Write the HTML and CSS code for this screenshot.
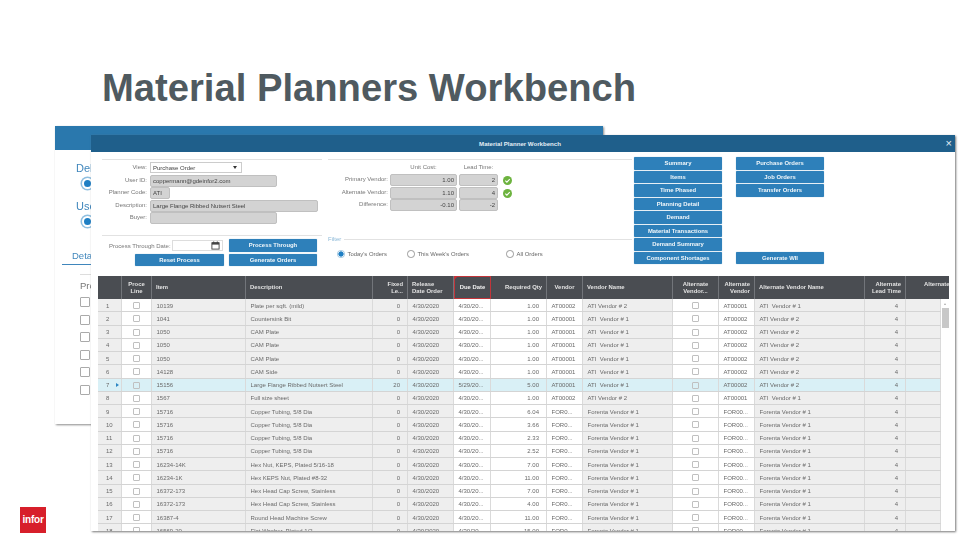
FILE: index.html
```html
<!DOCTYPE html>
<html lang="en">
<head>
<meta charset="utf-8">
<title>Material Planners Workbench</title>
<link rel="stylesheet" href="styles.css">
</head>
<body>
<main class="slide">
  <h1 class="slide-title">Material Planners Workbench</h1>

  <section class="win-back">
    <header class="win-back-head"><span class="win-back-title">Material Planner Workbench</span></header>
    <div class="back-body">
      <div class="back-label">Del</div>
      <span class="back-radio"></span>
      <div class="back-label back-label-use">Use</div>
      <span class="back-radio"></span>
      <div class="back-tab">Deta</div>
      <div class="back-rule"></div>
      <div class="back-pro">Pro</div>
      <span class="back-check"></span><span class="back-check"></span><span class="back-check"></span><span class="back-check"></span><span class="back-check"></span><span class="back-check"></span>
    </div>
  </section>

  <section class="win-front">
    <header class="win-head"><span class="win-title">Material Planner Workbench</span><span class="win-close">×</span></header>
    <div class="form">
      <div class="form-left">
        <div class="fields">
          <label class="f-label">View:</label><div class="select"><span>Purchase Order</span><i class="caret"></i></div>
          <label class="f-label">User ID:</label><div class="ro w127">coppermann@gdeinfor2.com</div>
          <label class="f-label">Planner Code:</label><div class="ro w20">ATI</div>
          <label class="f-label">Description:</label><div class="ro w168">Large Flange Ribbed Nutsert Steel</div>
          <label class="f-label">Buyer:</label><div class="ro w127"></div>
        </div>
        <div class="process">
          <div class="process-row process-row-a">
            <label class="p-label">Process Through Date:</label>
            <div class="date"><svg class="cal" viewBox="0 0 10 10"><rect x="1" y="2" width="8" height="7" fill="#fff" stroke="#444" stroke-width="1"/><rect x="1" y="1.5" width="8" height="2.5" fill="#444"/><path d="M3 .5v2M7 .5v2" stroke="#444"/></svg></div>
            <button class="btn btn-p">Process Through</button>
          </div>
          <div class="process-row process-row-b">
            <button class="btn btn-r">Reset Process</button>
            <button class="btn btn-p">Generate Orders</button>
          </div>
        </div>
      </div>

      <div class="form-mid">
        <div class="costs">
          <span></span><span class="c-head">Unit Cost:</span><span class="c-head">Lead Time:</span><span></span>
          <label class="c-label">Primary Vendor:</label><div class="ro num">1.00</div><div class="ro num">2</div><svg class="ok" viewBox="0 0 10 10"><circle cx="5" cy="5" r="5" fill="#6db33f"/><path d="M2.6 5.2l1.7 1.7 3.2-3.4" fill="none" stroke="#fff" stroke-width="1.2"/></svg>
          <label class="c-label">Alternate Vendor:</label><div class="ro num">1.10</div><div class="ro num">4</div><svg class="ok" viewBox="0 0 10 10"><circle cx="5" cy="5" r="5" fill="#6db33f"/><path d="M2.6 5.2l1.7 1.7 3.2-3.4" fill="none" stroke="#fff" stroke-width="1.2"/></svg>
          <label class="c-label">Difference:</label><div class="ro num">-0.10</div><div class="ro num">-2</div><span></span>
        </div>
        <div class="filter">
          <div class="legend"><span>Filter</span><i class="legend-line"></i></div>
          <div class="radios">
            <span class="opt opt-a"><i class="radio radio-on"></i>Today's Orders</span>
            <span class="opt opt-b"><i class="radio"></i>This Week's Orders</span>
            <span class="opt"><i class="radio"></i>All Orders</span>
          </div>
        </div>
      </div>

      <nav class="nav">
        <button class="btn">Summary</button>
        <button class="btn">Items</button>
        <button class="btn">Time Phased</button>
        <button class="btn">Planning Detail</button>
        <button class="btn">Demand</button>
        <button class="btn">Material Transactions</button>
        <button class="btn">Demand Summary</button>
        <button class="btn">Component Shortages</button>
        <button class="btn">Purchase Orders</button>
        <button class="btn">Job Orders</button>
        <button class="btn">Transfer Orders</button>
        <button class="btn btn-wii">Generate WII</button>
      </nav>
    </div>

    <div class="grid">
      <div class="grid-head">
        <div class="h"></div>
        <div class="h h-c">Proce<br>Line</div>
        <div class="h">Item</div>
        <div class="h">Description</div>
        <div class="h h-r">Fixed<br>Le...</div>
        <div class="h">Release<br>Date Order</div>
        <div class="h h-due">Due Date</div>
        <div class="h h-r">Required Qty</div>
        <div class="h h-c">Vendor</div>
        <div class="h">Vendor Name</div>
        <div class="h h-c">Alternate<br>Vendor...</div>
        <div class="h h-r">Alternate<br>Vendor</div>
        <div class="h">Alternate Vendor Name</div>
        <div class="h h-r">Alternate<br>Lead Time</div>
        <div class="h h-clip">Alternate</div>
      </div>
      <div class="grid-body">
        <div class="rows">
          <div class="row"><div class="c n">1</div><div class="c w k"><i class="box"></i></div><div class="c">10139</div><div class="c">Plate per sqft. (mild)</div><div class="c r">0</div><div class="c">4/30/2020</div><div class="c w">4/30/20...</div><div class="c w r">1.00</div><div class="c w">AT00002</div><div class="c">ATI Vendor # 2</div><div class="c w k"><i class="box"></i></div><div class="c w">AT00001</div><div class="c">ATI&nbsp; Vendor # 1</div><div class="c r">4</div><div class="c"></div></div>
          <div class="row"><div class="c n">2</div><div class="c w k"><i class="box"></i></div><div class="c">1041</div><div class="c">Countersink Bit</div><div class="c r">0</div><div class="c">4/30/2020</div><div class="c w">4/30/20...</div><div class="c w r">1.00</div><div class="c w">AT00001</div><div class="c">ATI&nbsp; Vendor # 1</div><div class="c w k"><i class="box"></i></div><div class="c w">AT00002</div><div class="c">ATI Vendor # 2</div><div class="c r">4</div><div class="c"></div></div>
          <div class="row"><div class="c n">3</div><div class="c w k"><i class="box"></i></div><div class="c">1050</div><div class="c">CAM Plate</div><div class="c r">0</div><div class="c">4/30/2020</div><div class="c w">4/30/20...</div><div class="c w r">1.00</div><div class="c w">AT00001</div><div class="c">ATI&nbsp; Vendor # 1</div><div class="c w k"><i class="box"></i></div><div class="c w">AT00002</div><div class="c">ATI Vendor # 2</div><div class="c r">4</div><div class="c"></div></div>
          <div class="row"><div class="c n">4</div><div class="c w k"><i class="box"></i></div><div class="c">1050</div><div class="c">CAM Plate</div><div class="c r">0</div><div class="c">4/30/2020</div><div class="c w">4/30/20...</div><div class="c w r">1.00</div><div class="c w">AT00001</div><div class="c">ATI&nbsp; Vendor # 1</div><div class="c w k"><i class="box"></i></div><div class="c w">AT00002</div><div class="c">ATI Vendor # 2</div><div class="c r">4</div><div class="c"></div></div>
          <div class="row"><div class="c n">5</div><div class="c w k"><i class="box"></i></div><div class="c">1050</div><div class="c">CAM Plate</div><div class="c r">0</div><div class="c">4/30/2020</div><div class="c w">4/30/20...</div><div class="c w r">1.00</div><div class="c w">AT00001</div><div class="c">ATI&nbsp; Vendor # 1</div><div class="c w k"><i class="box"></i></div><div class="c w">AT00002</div><div class="c">ATI Vendor # 2</div><div class="c r">4</div><div class="c"></div></div>
          <div class="row"><div class="c n">6</div><div class="c w k"><i class="box"></i></div><div class="c">14128</div><div class="c">CAM Side</div><div class="c r">0</div><div class="c">4/30/2020</div><div class="c w">4/30/20...</div><div class="c w r">1.00</div><div class="c w">AT00001</div><div class="c">ATI&nbsp; Vendor # 1</div><div class="c w k"><i class="box"></i></div><div class="c w">AT00002</div><div class="c">ATI Vendor # 2</div><div class="c r">4</div><div class="c"></div></div>
          <div class="row sel"><div class="c n">7<i class="cur"></i></div><div class="c k"><i class="box"></i></div><div class="c">15156</div><div class="c">Large Flange Ribbed Nutsert Steel</div><div class="c r">20</div><div class="c">4/30/2020</div><div class="c">5/29/20...</div><div class="c r">5.00</div><div class="c">AT00001</div><div class="c">ATI&nbsp; Vendor # 1</div><div class="c k"><i class="box"></i></div><div class="c">AT00002</div><div class="c">ATI Vendor # 2</div><div class="c r">4</div><div class="c"></div></div>
          <div class="row"><div class="c n">8</div><div class="c w k"><i class="box"></i></div><div class="c">1567</div><div class="c">Full size sheet</div><div class="c r">0</div><div class="c">4/30/2020</div><div class="c w">4/30/20...</div><div class="c w r">1.00</div><div class="c w">AT00002</div><div class="c">ATI Vendor # 2</div><div class="c w k"><i class="box"></i></div><div class="c w">AT00001</div><div class="c">ATI&nbsp; Vendor # 1</div><div class="c r">4</div><div class="c"></div></div>
          <div class="row"><div class="c n">9</div><div class="c w k"><i class="box"></i></div><div class="c">15716</div><div class="c">Copper Tubing, 5/8 Dia</div><div class="c r">0</div><div class="c">4/30/2020</div><div class="c w">4/30/20...</div><div class="c w r">6.04</div><div class="c w">FOR0...</div><div class="c">Forenta Vendor # 1</div><div class="c w k"><i class="box"></i></div><div class="c w">FOR00...</div><div class="c">Forenta Vendor # 1</div><div class="c r">4</div><div class="c"></div></div>
          <div class="row"><div class="c n">10</div><div class="c w k"><i class="box"></i></div><div class="c">15716</div><div class="c">Copper Tubing, 5/8 Dia</div><div class="c r">0</div><div class="c">4/30/2020</div><div class="c w">4/30/20...</div><div class="c w r">3.66</div><div class="c w">FOR0...</div><div class="c">Forenta Vendor # 1</div><div class="c w k"><i class="box"></i></div><div class="c w">FOR00...</div><div class="c">Forenta Vendor # 1</div><div class="c r">4</div><div class="c"></div></div>
          <div class="row"><div class="c n">11</div><div class="c w k"><i class="box"></i></div><div class="c">15716</div><div class="c">Copper Tubing, 5/8 Dia</div><div class="c r">0</div><div class="c">4/30/2020</div><div class="c w">4/30/20...</div><div class="c w r">2.33</div><div class="c w">FOR0...</div><div class="c">Forenta Vendor # 1</div><div class="c w k"><i class="box"></i></div><div class="c w">FOR00...</div><div class="c">Forenta Vendor # 1</div><div class="c r">4</div><div class="c"></div></div>
          <div class="row"><div class="c n">12</div><div class="c w k"><i class="box"></i></div><div class="c">15716</div><div class="c">Copper Tubing, 5/8 Dia</div><div class="c r">0</div><div class="c">4/30/2020</div><div class="c w">4/30/20...</div><div class="c w r">2.52</div><div class="c w">FOR0...</div><div class="c">Forenta Vendor # 1</div><div class="c w k"><i class="box"></i></div><div class="c w">FOR00...</div><div class="c">Forenta Vendor # 1</div><div class="c r">4</div><div class="c"></div></div>
          <div class="row"><div class="c n">13</div><div class="c w k"><i class="box"></i></div><div class="c">16234-14K</div><div class="c">Hex Nut, KEPS, Plated 5/16-18</div><div class="c r">0</div><div class="c">4/30/2020</div><div class="c w">4/30/20...</div><div class="c w r">7.00</div><div class="c w">FOR0...</div><div class="c">Forenta Vendor # 1</div><div class="c w k"><i class="box"></i></div><div class="c w">FOR00...</div><div class="c">Forenta Vendor # 1</div><div class="c r">4</div><div class="c"></div></div>
          <div class="row"><div class="c n">14</div><div class="c w k"><i class="box"></i></div><div class="c">16234-1K</div><div class="c">Hex KEPS Nut, Plated #8-32</div><div class="c r">0</div><div class="c">4/30/2020</div><div class="c w">4/30/20...</div><div class="c w r">11.00</div><div class="c w">FOR0...</div><div class="c">Forenta Vendor # 1</div><div class="c w k"><i class="box"></i></div><div class="c w">FOR00...</div><div class="c">Forenta Vendor # 1</div><div class="c r">4</div><div class="c"></div></div>
          <div class="row"><div class="c n">15</div><div class="c w k"><i class="box"></i></div><div class="c">16372-173</div><div class="c">Hex Head Cap Screw, Stainless</div><div class="c r">0</div><div class="c">4/30/2020</div><div class="c w">4/30/20...</div><div class="c w r">7.00</div><div class="c w">FOR0...</div><div class="c">Forenta Vendor # 1</div><div class="c w k"><i class="box"></i></div><div class="c w">FOR00...</div><div class="c">Forenta Vendor # 1</div><div class="c r">4</div><div class="c"></div></div>
          <div class="row"><div class="c n">16</div><div class="c w k"><i class="box"></i></div><div class="c">16372-173</div><div class="c">Hex Head Cap Screw, Stainless</div><div class="c r">0</div><div class="c">4/30/2020</div><div class="c w">4/30/20...</div><div class="c w r">4.00</div><div class="c w">FOR0...</div><div class="c">Forenta Vendor # 1</div><div class="c w k"><i class="box"></i></div><div class="c w">FOR00...</div><div class="c">Forenta Vendor # 1</div><div class="c r">4</div><div class="c"></div></div>
          <div class="row"><div class="c n">17</div><div class="c w k"><i class="box"></i></div><div class="c">16387-4</div><div class="c">Round Head Machine Screw</div><div class="c r">0</div><div class="c">4/30/2020</div><div class="c w">4/30/20...</div><div class="c w r">11.00</div><div class="c w">FOR0...</div><div class="c">Forenta Vendor # 1</div><div class="c w k"><i class="box"></i></div><div class="c w">FOR00...</div><div class="c">Forenta Vendor # 1</div><div class="c r">4</div><div class="c"></div></div>
          <div class="row"><div class="c n">18</div><div class="c w k"><i class="box"></i></div><div class="c">16569-20</div><div class="c">Flat Washer, Plated 1/2</div><div class="c r">0</div><div class="c">4/30/2020</div><div class="c w">4/30/20...</div><div class="c w r">15.00</div><div class="c w">FOR0...</div><div class="c">Forenta Vendor # 1</div><div class="c w k"><i class="box"></i></div><div class="c w">FOR00...</div><div class="c">Forenta Vendor # 1</div><div class="c r">4</div><div class="c"></div></div>
        </div>
        <div class="scroll"><i class="scroll-up"></i><i class="scroll-thumb"></i></div>
      </div>
    </div>
  </section>

  <div class="logo">infor</div>
</main>
</body>
</html>
```
FILE: styles.css
```css
* { box-sizing: border-box; }
html, body { margin: 0; padding: 0; background: #fff; }
body { font-family: "Liberation Sans", Arial, sans-serif; overflow: hidden; }
.slide { position: relative; width: 975px; height: 548px; overflow: hidden; padding: 67px 0 0 102px; }
.slide-title { margin: 0; font-size: 38.2px; line-height: 42px; font-weight: 700; color: #4f5a60; white-space: nowrap; }

.win-back { position: absolute; left: 55px; top: 126px; width: 548px; height: 298px; background: #fff; box-shadow: 1px 1px 2px #8a8a8a; overflow: hidden; filter: blur(.45px); }
.win-back-head { height: 24px; background: #2a78ad; text-align: center; }
.win-back-title { display: block; padding-top: 7.5px; font-size: 7px; line-height: 8px; color: #a9cbe2; }
.back-body { display: flex; flex-direction: column; align-items: flex-start; padding-left: 21px; }
.back-label { margin-top: 10px; font-size: 11px; line-height: 17px; color: #3f86bc; }
.back-label-use { margin-top: 9px; }
.back-radio { width: 11px; height: 11px; margin: 1px 0 0 6px; border-radius: 50%; background: #1f7fc4; border: 2px solid #fff; box-shadow: 0 0 0 1.5px #8fbfe0; }
.back-tab { margin: 21px 0 0 -14px; padding: 0 0 1px 10px; width: 40px; font-size: 9.5px; line-height: 15px; color: #3f86bc; border-bottom: 1px solid #3f86bc; }
.back-rule { width: 20px; height: 1px; margin: 9px 0 0 4px; background: #ddd; }
.back-pro { margin: 4px 0 5px 4px; font-size: 9.5px; line-height: 13px; color: #777; }
.back-check { width: 10px; height: 10px; margin: 0 0 7.6px 4px; border: 1px solid #aaa; border-radius: 1px; background: #fff; }

.win-front { position: absolute; left: 91px; top: 135px; width: 864px; height: 396px; background: #fff; box-shadow: 1px 1px 2px #777; overflow: hidden; filter: blur(.45px); }
.win-head { position: relative; height: 17px; background: #1f5f8b; display: flex; align-items: center; justify-content: center; padding-right: 6px; }
.win-title { font-size: 6.1px; font-weight: 700; color: #e4eef5; }
.win-close { position: absolute; right: 3px; top: 2px; font-size: 11px; line-height: 13px; color: #e4eef5; }

.form { display: flex; height: 124px; padding-left: 11px; }
.form-left { width: 220px; padding-top: 7px; }
.fields { display: grid; grid-template-columns: 45px 1fr; column-gap: 3px; grid-auto-rows: 12.5px; align-content: start; height: 77px; padding-top: 2px; border-top: 1px solid #e2e2e2; border-bottom: 1px solid #e2e2e2; }
.f-label, .p-label, .c-label { font-size: 6px; line-height: 10px; color: #777; text-align: right; white-space: nowrap; }
.select { display: flex; align-items: center; justify-content: space-between; width: 92px; height: 11px; padding: 0 4px 0 2px; border: 1px solid #ccc; background: #fff; font-size: 6px; color: #444; }
.caret { width: 0; height: 0; border: 2.5px solid transparent; border-top: 3px solid #333; border-bottom: 0; }
.ro { height: 12px; padding: 0 2px; border: 1px solid #c0c0c0; border-radius: 2px; background: #d3d3d3; font-size: 6px; line-height: 10px; color: #444; white-space: nowrap; }
.w127 { width: 127px; }
.w20 { width: 20px; }
.w168 { width: 168px; }
.process { padding-top: 3px; }
.process-row { display: flex; align-items: center; }
.process-row-a { height: 13px; padding-left: 7px; }
.process-row-b { height: 13px; margin-top: 1.5px; padding-left: 33px; gap: 5px; }
.p-label { width: 60px; }
.date { display: flex; justify-content: flex-end; align-items: center; width: 51px; height: 11px; margin: 0 6px 0 3px; padding-right: 2px; border: 1px solid #ddd; background: #fff; }
.cal { width: 9px; height: 9px; }
.btn { height: 12.5px; padding: 0; border: 0; border-radius: 1px; background: #2e80ba; box-shadow: 0 0 1px #7aa8c8; color: #f0f6fa; font-family: inherit; font-size: 5.9px; font-weight: 700; line-height: 12.5px; white-space: nowrap; }
.btn-p { width: 88px; }
.btn-r { width: 89px; }

.form-mid { width: 304px; margin-left: 6px; padding-top: 7px; }
.costs { display: grid; grid-template-columns: 60px 67px 39px 11px; column-gap: 2px; grid-template-rows: 14px 12.5px 12.5px 12.5px; align-items: start; height: 77px; border-top: 1px solid #e2e2e2; }
.c-head { padding-top: 3px; font-size: 6px; line-height: 8px; color: #777; text-align: center; }
.num { text-align: right; }
.ok { width: 9px; height: 9px; margin: 2px 0 0 3px; }
.legend { display: flex; align-items: center; gap: 3px; height: 8px; margin-top: -1px; font-size: 6px; color: #8db9d8; }
.legend-line { flex: 1; height: 1px; background: #e2e2e2; }
.radios { display: flex; align-items: center; padding: 7px 0 0 9px; font-size: 5.9px; color: #666; }
.opt { display: flex; align-items: center; gap: 3px; white-space: nowrap; }
.opt-a { width: 70px; }
.opt-b { width: 99px; }
.radio { width: 7.5px; height: 7.5px; border-radius: 50%; border: 1px solid #999; background: #fff; }
.radio-on { border-color: #9cc4e0; background: radial-gradient(circle, #1f7fc4 0 2.4px, #fff 2.8px); }

.nav { display: grid; grid-template-columns: 88px 88px; grid-template-rows: repeat(8, 12.5px); grid-auto-flow: column; gap: 1px 14px; margin-left: 2px; padding-top: 5px; align-content: start; }
.btn-wii { grid-row: 8; grid-column: 2; }

.grid { width: 851px; margin-left: 7px; }
.grid-head, .row { display: grid; grid-template-columns: 24px 30px 94px 127px 35px 46px 37px 56px 36px 90px 46px 36px 110px 41px 35px; }
.grid-head { grid-template-columns: 24px 30px 94px 127px 35px 46px 37px 56px 36px 90px 46px 36px 110px 41px 43px; height: 23px; background: #4a4d52; }
.h { display: flex; align-items: center; padding: 0 4px; border-right: 1px solid #72757a; font-size: 5.9px; line-height: 6.5px; font-weight: 700; color: #e2e2e2; overflow: hidden; white-space: nowrap; }
.h-c { justify-content: center; text-align: center; }
.h-r { justify-content: flex-end; text-align: right; }
.h-due { position: relative; border: 1px solid #c2353a; color: #f2f2f2; justify-content: center; }
.h-due::before { content: ""; position: absolute; left: -1px; top: -1px; border: 2px solid transparent; border-top-color: #e0242c; border-left-color: #e0242c; }
.h-clip { padding: 5px 0 0 18px; border-right: 0; align-items: flex-start; }
.grid-body { display: flex; height: 232px; overflow: hidden; }
.rows { width: 843px; }
.row { height: 13.25px; border-bottom: 1px solid #d4d4d4; background: #eee; }
.c { display: flex; align-items: center; min-width: 0; padding: 1px 4px 0 4.5px; border-right: 1px solid #dadada; font-size: 6px; color: #6a6a6a; white-space: nowrap; overflow: hidden; }
.w { background: #fff; }
.r { justify-content: flex-end; padding-right: 7px; }
.k { justify-content: center; }
.n { padding-left: 8px; }
.box { width: 7px; height: 7px; border: 1px solid #c0c0c0; background: #fff; border-radius: 1px; }
.sel { background: #d9f0f6; }
.sel .box { background: transparent; }
.cur { margin-left: 7px; border: 2px solid transparent; border-left: 3px solid #2d86c4; border-right: 0; }
.scroll { display: flex; flex-direction: column; align-items: center; width: 8px; background: #fff; }
.scroll-up { margin-top: 4px; border: 1.5px solid transparent; border-bottom: 2px solid #aaa; border-top: 0; }
.scroll-thumb { width: 7px; height: 20px; margin-top: 3px; background: #c8c8c8; }

.logo { position: absolute; left: 20px; top: 507px; width: 26px; height: 26px; background: #d71f2a; color: #fff; font-size: 10px; font-weight: 700; line-height: 26px; text-align: center; letter-spacing: -.2px; }
```
